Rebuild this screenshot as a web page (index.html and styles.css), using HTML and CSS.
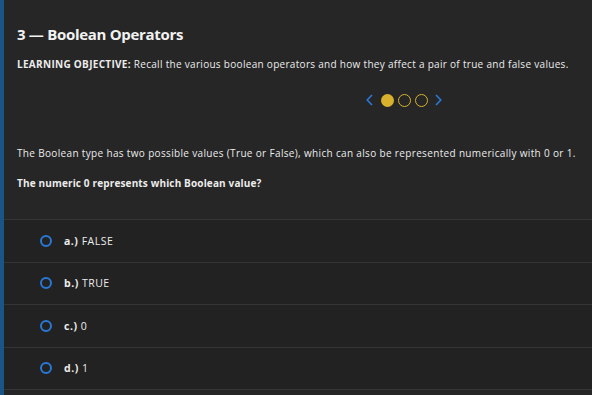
FILE: index.html
```html
<!DOCTYPE html>
<html>
<head>
<meta charset="utf-8">
<link rel="stylesheet" href="styles.css">
</head>
<body>
<div class="page">
  <section class="intro">
    <h1 class="title">3 — Boolean Operators</h1>
    <p class="objective"><b>LEARNING OBJECTIVE:</b> Recall the various boolean operators and how they affect a pair of true and false values.</p>
    <div class="pager">
      <svg class="chev chev-left" width="7" height="12" viewBox="0 0 7 12"><path d="M6 1 L1.2 6 L6 11" fill="none" stroke="#2a78d6" stroke-width="1.6"/></svg>
      <span class="dot filled"></span>
      <span class="dot"></span>
      <span class="dot"></span>
      <svg class="chev chev-right" width="7" height="12" viewBox="0 0 7 12"><path d="M1 1 L5.8 6 L1 11" fill="none" stroke="#2a78d6" stroke-width="1.6"/></svg>
    </div>
    <p class="body-text">The Boolean type has two possible values (True or False), which can also be represented numerically with 0 or 1.</p>
    <p class="question">The numeric 0 represents which Boolean value?</p>
  </section>
  <ul class="options">
    <li class="option"><span class="radio"></span><span class="label"><b>a.)</b> FALSE</span></li>
    <li class="option"><span class="radio"></span><span class="label"><b>b.)</b> TRUE</span></li>
    <li class="option"><span class="radio"></span><span class="label"><b>c.)</b> 0</span></li>
    <li class="option"><span class="radio"></span><span class="label"><b>d.)</b> 1</span></li>
  </ul>
</div>
</body>
</html>
```

FILE: styles.css
```css
html, body {
  margin: 0;
  padding: 0;
  background: #262626;
}
body {
  font-family: "Open Sans", "Liberation Sans", sans-serif;
  color: #ececec;
}
.page {
  border-left: 4px solid #1b5486;
  min-height: 395px;
  box-sizing: border-box;
}
.intro {
  padding: 24px 13px 0 13px;
}
.title {
  margin: 0;
  font-size: 15px;
  line-height: 20px;
  font-weight: 700;
  letter-spacing: -0.3px;
  color: #f2f2f2;
}
.objective {
  margin: 13px 0 0 0;
  font-size: 10px;
  line-height: 14px;
  letter-spacing: 0.3px;
  white-space: nowrap;
}
.objective b {
  font-weight: 700;
}
.pager {
  display: flex;
  justify-content: center;
  align-items: center;
  gap: 4px;
  margin: 22px 0 0 0;
  padding-left: 211px;
  height: 14px;
}
.chev {
  display: block;
}
.chev-left {
  margin-right: 4px;
}
.chev-right {
  margin-left: 3px;
}
.dot {
  box-sizing: border-box;
  width: 13px;
  height: 13px;
  border: 1.5px solid #d8b22c;
  border-radius: 50%;
}
.dot.filled {
  background: #d8b22c;
  border: none;
}
.body-text {
  margin: 39px 0 0 0;
  font-size: 10px;
  line-height: 14px;
  letter-spacing: 0.34px;
  white-space: nowrap;
}
.question {
  margin: 16px 0 0 0;
  font-size: 10px;
  line-height: 14px;
  letter-spacing: 0.15px;
  font-weight: 700;
}
.options {
  list-style: none;
  margin: 29px 0 0 0;
  padding: 0;
  background: #222222;
  border-top: 1px solid #353535;
}
.option {
  display: flex;
  align-items: center;
  height: 41.5px;
  border-bottom: 1px solid #353535;
  padding-left: 36px;
}
.radio {
  width: 8px;
  height: 8px;
  border: 2px solid #2a78d6;
  border-radius: 50%;
  margin-right: 12px;
}
.label {
  font-size: 10.5px;
  letter-spacing: 0.5px;
  color: #ececec;
}
.label b {
  font-weight: 700;
}
```
